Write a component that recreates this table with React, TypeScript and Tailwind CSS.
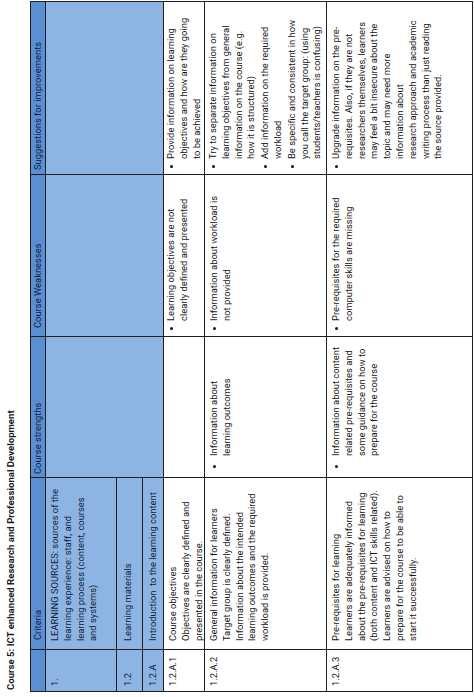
import React from "react";

type Lines = string[];

const header = "bg-[#5a8fd4] text-[#0f1f38]";
const blue = "bg-[#8eb4e3] text-[#0f1f38]";
const white = "bg-white text-[#141414]";

function Text({ lines }: { lines: Lines }) {
  return (
    <div className="whitespace-nowrap">
      {lines.map((l, i) => (
        <div key={i}>{l}</div>
      ))}
    </div>
  );
}

function Bullets({ items, wide }: { items: Lines[]; wide?: boolean }) {
  return (
    <div className="flex flex-col gap-[1px]">
      {items.map((lines, i) => (
        <div key={i} className="flex">
          <span className={`${wide ? "w-[12px]" : "w-[9px]"} flex h-[12.8px] shrink-0 items-center`}>
            <span className="h-[3px] w-[3px] rounded-full bg-[#111]" />
          </span>
          <Text lines={lines} />
        </div>
      ))}
    </div>
  );
}

function Num({ children, bg = white }: { children: React.ReactNode; bg?: string }) {
  return <div className={`${bg} pl-[5px] pt-[3px]`}>{children}</div>;
}

export default function App() {
  return (
    <div className="relative h-[697px] w-[474px] overflow-hidden bg-white">
      <div className="h-[474px] w-[697px] origin-top-left translate-y-[697px] -rotate-90 font-[family-name:Roboto,sans-serif] text-[9.4px] leading-[12.8px]">
        {/* Title */}
        <div className="h-[30px] pl-[7px] pt-[4px] text-[9.6px] font-bold leading-[14px] text-[#1a1a1a]">
          Course 5: ICT enhanced Research and Professional Development
        </div>

        <div className="ml-[5px] grid w-[691px] grid-cols-[41px_171px_140px_161px_172px] grid-rows-[14px_70px_25px_20px_40px_121px_145px] gap-px border border-[#1f1f1f] bg-[#1f1f1f]">
          {/* header row */}
          <div className={header} />
          <div className={`${header} flex items-center pl-[9px]`}>Criteria</div>
          <div className={`${header} flex items-center pl-[3px]`}>Course strengths</div>
          <div className={`${header} flex items-center pl-[8px]`}>Course Weaknesses</div>
          <div className={`${header} flex items-center pl-[4px]`}>Suggestions for improvements</div>

          {/* 1. */}
          <Num bg={blue}>1.</Num>
          <div className={`${blue} pl-[8px] pt-[3px]`}>
            <Text
              lines={[
                "LEARNING SOURCES: sources of the",
                "learning experience: staff, and",
                "learning process (content, courses",
                "and systems)",
              ]}
            />
          </div>
          <div className={`${blue} row-span-3`} />
          <div className={`${blue} row-span-3`} />
          <div className={`${blue} row-span-3`} />

          {/* 1.2 */}
          <Num bg={blue}>
            <div className="pt-[2px]">1.2</div>
          </Num>
          <div className={`${blue} pl-[8px] pt-[5px]`}>Learning materials</div>

          {/* 1.2.A */}
          <div className={`${blue} flex items-center pl-[5px]`}>1.2.A</div>
          <div className={`${blue} flex items-center pl-[8px]`}>Introduction&nbsp; to the learning content</div>

          {/* 1.2.A.1 */}
          <Num>1.2.A.1</Num>
          <div className={`${white} pl-[8px] pt-[3px]`}>
            <Text lines={["Course objectives", "Objectives are clearly defined and", "presented in the course."]} />
          </div>
          <div className={white} />
          <div className={`${white} pl-[6px] pt-[1px]`}>
            <Bullets items={[["Learning objectives are not", "clearly defined and presented"]]} />
          </div>
          <div className={`${white} pl-[6px] pt-[1px]`}>
            <Bullets
              items={[["Provide information on learning", "objectives and how are they going", "to be achieved"]]}
            />
          </div>

          {/* 1.2.A.2 */}
          <Num>1.2.A.2</Num>
          <div className={`${white} pl-[8px] pt-[3px]`}>
            <Text
              lines={[
                "General information for learners",
                "Target group is clearly defined.",
                "Information about the intended",
                "learning outcomes and the required",
                "workload is provided.",
              ]}
            />
          </div>
          <div className={`${white} pl-[9px] pt-[3px]`}>
            <Bullets wide items={[["Information about", "learning outcomes"]]} />
          </div>
          <div className={`${white} pl-[6px] pt-[3px]`}>
            <Bullets items={[["Information about workload is", "not provided"]]} />
          </div>
          <div className={`${white} pl-[6px] pt-[2px]`}>
            <Bullets
              items={[
                [
                  "Try to separate information on",
                  "learning objectives from general",
                  "information on the course (e.g.",
                  "how it is structured)",
                ],
                ["Add information on the required", "workload"],
                [
                  "Be specific and consistent in how",
                  "you call the target group: (using",
                  "students/teachers is confusing)",
                ],
              ]}
            />
          </div>

          {/* 1.2.A.3 */}
          <Num>1.2.A.3</Num>
          <div className={`${white} pl-[8px] pt-[3px]`}>
            <Text
              lines={[
                "Pre-requisites for learning",
                "Learners are adequately informed",
                "about the pre-requisites for learning",
                "(both content and ICT skills related).",
                "Learners are advised on how to",
                "prepare for the course to be able to",
                "start it successfully.",
              ]}
            />
          </div>
          <div className={`${white} pl-[9px] pt-[3px]`}>
            <Bullets
              wide
              items={[
                [
                  "Information about content",
                  "related pre-requisites and",
                  "some guidance on how to",
                  "prepare for the course",
                ],
              ]}
            />
          </div>
          <div className={`${white} pl-[6px] pt-[3px]`}>
            <Bullets items={[["Pre-requisites for the required", "computer skills are missing"]]} />
          </div>
          <div className={`${white} pl-[6px] pt-[3px]`}>
            <Bullets
              items={[
                [
                  "Upgrade information on the pre-",
                  "requisites. Also, if they are not",
                  "researchers themselves, learners",
                  "may feel a bit insecure about the",
                  "topic and may need more",
                  "information about",
                  "research approach and academic",
                  "writing process than just reading",
                  "the source provided.",
                ],
              ]}
            />
          </div>
        </div>
      </div>
    </div>
  );
}
